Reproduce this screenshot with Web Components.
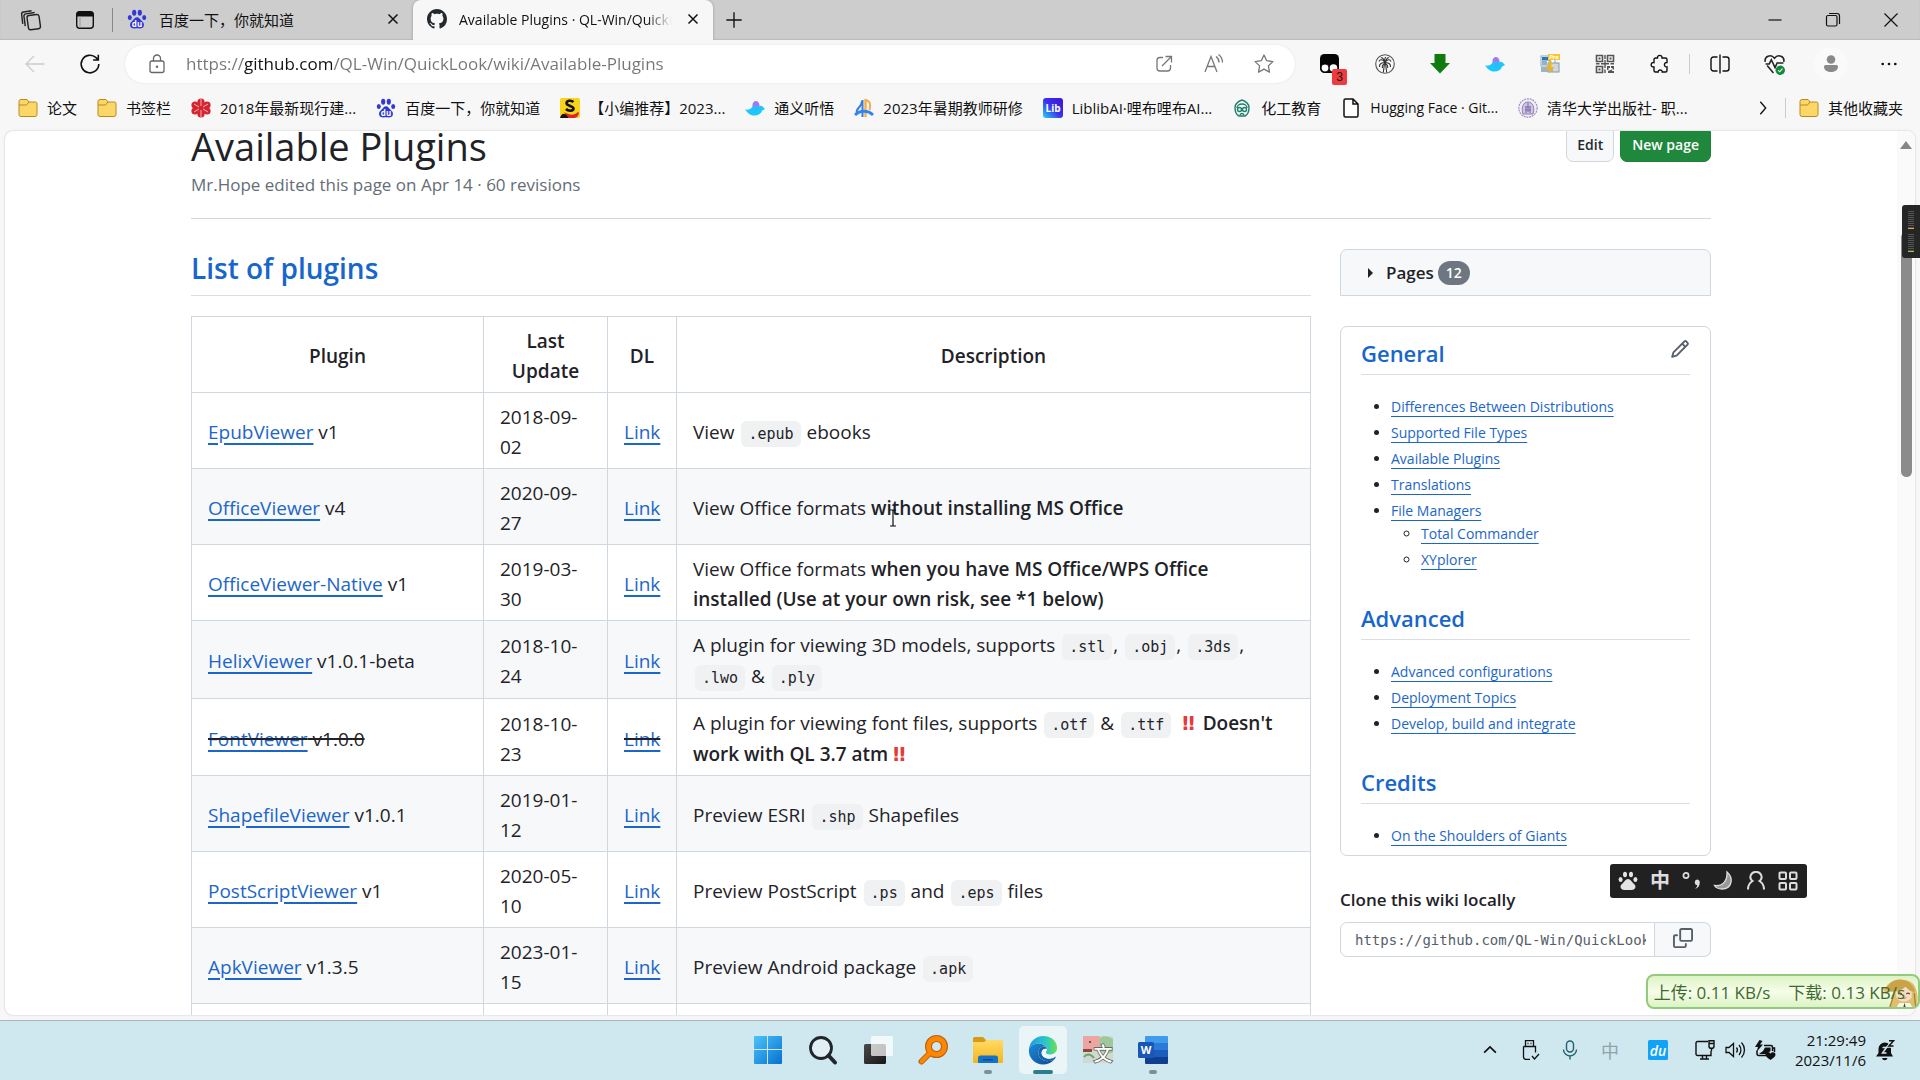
<!DOCTYPE html>
<html lang="zh-CN">
<head>
<meta charset="utf-8">
<title>Available Plugins · QL-Win/QuickLook Wiki</title>
<style>
  html, body { height: 100%; }
  body {
    margin: 0;
    display: flex;
    flex-direction: column;
    overflow: hidden;
    font-family: "Open Sans", "Noto Sans CJK SC", sans-serif;
    font-size: 14px;
    color: #1f2328;
    background: #f7f7f7;
  }
</style>
</head>
<body>
<browser-window></browser-window>
<task-bar></task-bar>

<script>
// every picture is drawn on a 20x20 grid unless the entry gives its own view box
const ICONS = {
  workspaces: `<g fill="none" stroke="#222" stroke-width="1.3"><rect x="7" y="5.5" width="11" height="13" rx="2" transform="rotate(-8 12 12)"/><path d="M4.800 15.5 3.6 6.7a2 2 0 0 1 1.7-2.3l8-1.2M2.5 13.5 1.5 5a2 2 0 0 1 1.7-2.2l7.3-1.2"/></g>`,
  tabaction: `<rect x="1.7" y="1.7" width="16.6" height="16.6" rx="3" fill="none" stroke="#111" stroke-width="1.4"/><path d="M1.5 6.5V4a2.5 2.5 0 0 1 2.5-2.5h12A2.5 2.5 0 0 1 18.5 4v2.5z" fill="#111"/><path d="M5 6v12" stroke="#999"/>`,
  baidu: `<g fill="#2f37d6"><ellipse cx="7.2" cy="3.8" rx="2.1" ry="3"/><ellipse cx="12.8" cy="3.8" rx="2.1" ry="3"/><ellipse cx="2.8" cy="8.5" rx="2" ry="2.6"/><ellipse cx="17.2" cy="8.5" rx="2" ry="2.6"/><path d="M10 8.3c2.2 0 3 2 4.3 3.3 1.7 1.6 3.2 2.8 2.5 5.4-.7 2.4-3 2.6-6.8 2.3-3.8.3-6.1.1-6.8-2.3-.7-2.6.8-3.8 2.5-5.4C7 10.3 7.8 8.3 10 8.3z"/></g><text x="10" y="17.8" font-family="Open Sans, sans-serif" font-size="8" font-weight="700" fill="#fff" text-anchor="middle">du</text>`,
  github: ["0 0 16 16", `<path fill="#24292f" d="M8 0C3.58 0 0 3.58 0 8c0 3.54 2.29 6.53 5.47 7.59.4.07.55-.17.55-.38 0-.19-.01-.82-.01-1.49-2.01.37-2.53-.49-2.69-.94-.09-.23-.48-.94-.82-1.13-.28-.15-.68-.52-.01-.53.63-.01 1.08.58 1.23.82.72 1.21 1.87.87 2.33.66.07-.52.28-.87.51-1.07-1.78-.2-3.64-.89-3.64-3.95 0-.87.31-1.59.82-2.15-.08-.2-.36-1.02.08-2.12 0 0 .67-.21 2.2.82.64-.18 1.32-.27 2-.27s1.36.09 2 .27c1.53-1.04 2.2-.82 2.2-.82.44 1.1.16 1.92.08 2.12.51.56.82 1.27.82 2.15 0 3.07-1.87 3.75-3.65 3.95.29.25.54.73.54 1.48 0 1.07-.01 1.93-.01 2.2 0 .21.15.46.55.38A8.01 8.01 0 0 0 16 8c0-4.42-3.58-8-8-8z"/>`],
  close: `<path d="m5 5 10 10M15 5 5 15" stroke="#111" stroke-width="1.6"/>`,
  plus: `<path d="M10 1.5v17M1.5 10h17" stroke="#111" stroke-width="1.5"/>`,
  minimize: `<path d="M3.5 10h13" stroke="#111" stroke-width="1.2"/>`,
  restore: `<g fill="none" stroke="#111" stroke-width="1.2"><rect x="3.5" y="5.5" width="10.5" height="10.5" rx="1.5"/><path d="M6 3.5h8A2.5 2.5 0 0 1 16.5 6v8"/></g>`,
  winclose: `<path d="m3.5 3.5 13 13m0-13-13 13" stroke="#111" stroke-width="1.2"/>`,
  back: `<path d="M19.500 10H1m8-8-8 8 8 8" fill="none" stroke="#ccc" stroke-width="1.3"/>`,
  reload: `<path d="M18.8 10A8.8 8.800 0 1 1 16 3.600L18 6M18.3 .8V6h-5.2" fill="none" stroke="#111" stroke-width="1.6"/>`,
  lock: `<g fill="none" stroke="#666" stroke-width="1.3"><rect x="3" y="7" width="14" height="11.5" rx="2"/><path d="M6.5 7V4.5a3.500 3.500 0 0 1 7 0V7"/></g><circle cx="10" cy="12.7" r="1.2" fill="#666"/>`,
  open: `<path d="M9 3.5H6A3 3 0 0 0 3 6.5V14a3 3 0 0 0 3 3h7.5a3 3 0 0 0 3-3v-3M8 12l9-9M11.5 2.5h6v6" fill="none" stroke="#777" stroke-width="1.3"/>`,
  read: `<path d="m1 18 6-15.500L13 18M3.2 12.5h7.7M12 2.5a7 7 0 0 1 3 6M14.5.5a10 10 0 0 1 4 8" fill="none" stroke="#777" stroke-width="1.3"/>`,
  star: `<path d="m10 1 2.700 5.700 6.200.9-4.500 4.300 1.100 6.200-5.500-3-5.500 3 1.100-6.200L1.100 7.600l6.200-.9z" fill="none" stroke="#777" stroke-width="1.3" stroke-linejoin="round"/>`,
  monkey: `<rect width="19" height="19" rx="4.5" fill="#050505"/><circle cx="5" cy="14" r="4" fill="#fff" stroke="#050505" stroke-width="1.2"/><circle cx="13.500" cy="14" r="3.800" fill="#fff"/>`,
  tree: `<circle cx="10" cy="10" r="9.300" fill="#f7f7f7" stroke="#555" stroke-width="1.1"/><g fill="none" stroke="#333" stroke-width="1.1"><path d="M9.500 9.500 8.300 18.500M10.500 9.500l1.200 9"/><path d="M10 9C8 5 5 5 4 7.500M10 9c-3-1-6 1-5.500 4M10 9C9 5 7 3 6 4M10 9c2-4 5-4 6-1.500M10 9c3-1 6 1 5.500 4M10 9c1-4 3-6 4-5M10 9c-1-3 0-5 .5-6M10 9.500c-2 1-3 3-2.500 4.500M10 9.500c2 1 3 3 2.500 4.500"/></g>`,
  download: `<path d="M4.5 0h11v9H20L10 19.500 0 9h4.500z" fill="#107c10"/>`,
  bird: `<path d="M7.500 10C7 5 8.500 3 11 3s4 3 3.500 7z" fill="#a07af0"/><path d="M0 11.500c4 .5 5.500-.5 7.500-2.500 2-1.800 5-1.500 6.500-.2 1-1.300 2.800-1.300 3.800 0L20 11l-2.800 1.500C16 16 13 17.500 9.500 17.500 4.500 17.500 3 15 0 11.500z" fill="#1ac8fb"/><path d="M8 9.500c2-1.500 5-1 6.500.5l-4 3.500z" fill="#4da5f6" opacity=".6"/>`,
  shot: `<rect x="1" y="2" width="14" height="10" fill="#fff" stroke="#8aa7c0"/><rect x="2" y="3" width="9" height="3.5" fill="#3475a8"/><rect x="2" y="7" width="5" height="4" fill="#8fb3cc"/><rect x="8" y="9" width="11" height="9" fill="#cfd8dd" stroke="#8897a0"/><path d="M1 13h12v5H1z" fill="#9fb4c0"/><rect x="8" y="0" width="12" height="6" fill="#f6c531"/><text x="14" y="5" font-family="Open Sans, sans-serif" font-size="6" font-weight="700" font-style="italic" fill="#fff" text-anchor="middle">Pro</text><path d="M8.5 7h3v6h3L10 18l-4.500-5h3z" fill="#f0b41c"/>`,
  qr: `<path d="M1.500 1.500h6v6h-6zM12.500 1.500h6v6h-6zM1.500 12.500h6v6h-6z" fill="none" stroke="#555" stroke-width="1.600"/><path d="M3.500 3.500h2v2h-2zM14.500 3.500h2v2h-2zM3.500 14.500h2v2h-2zM9.300 1h1.400v4H9.300zM9.300 6h1.400v3H14v1.400h-3.300V14H9.300v-3.600H6V9h3.300zM1 9h3.500v1.400H1zM15.500 9H19v1.400h-3.500zM9.300 15.500h1.400V19H9.300zM12 12h3v2h-1.500v2H12zM16 12h3v3.500h-1.500V14H16zM13 17l4-1.500V17h2v2h-6z" fill="#555"/>`,
  puzzle: `<path d="M7.500 4C7 .5 12.500.5 12 4h3.500A1.500 1.500 0 0 1 17 5.500v3c-3.400-.6-3.400 5 0 4.400v3.600a1.500 1.500 0 0 1-1.500 1.500h-3.300c.3-2.600-4.200-2.600-4 0H5.500A1.500 1.500 0 0 1 4 16.500V13c-3.800.4-3.800-5 0-4.400V5.500A1.500 1.500 0 0 1 5.500 4z" fill="none" stroke="#111" stroke-width="1.4"/>`,
  split: `<path d="M7.500 3h-4A2.500 2.500 0 0 0 1 5.500v9A2.500 2.500 0 0 0 3.500 17h4M12.500 3h4A2.500 2.500 0 0 1 19 5.500v9a2.500 2.500 0 0 1-2.500 2.500h-4M10 .5v19" fill="none" stroke="#111" stroke-width="1.4"/>`,
  heart: `<path d="M1.500 9.500H5l2-4 3.500 7.500 2-4.500h6M1.200 7.500C0 2.500 6.500-.5 10 4c3.500-4.500 10-1.500 8.800 3.500M3 11l6 7" fill="none" stroke="#222" stroke-width="1.5"/><circle cx="15.500" cy="15.500" r="4.500" fill="#128a3a"/><path d="m13.500 15.500 1.500 1.500 2.600-3" fill="none" stroke="#fff"/>`,
  profile: `<circle cx="10" cy="5.5" r="4.3" fill="#8a8a8a"/><path d="M3 12.500A1.500 1.500 0 0 1 4.500 11h11a1.500 1.500 0 0 1 1.500 1.500c0 4-3.500 5.500-7 5.500s-7-1.500-7-5.500z" fill="#8a8a8a"/>`,
  more: `<g fill="#111"><circle cx="3" cy="10" r="1.5"/><circle cx="10" cy="10" r="1.5"/><circle cx="17" cy="10" r="1.5"/></g>`,
  folder: `<path d="M3 1.500h6l2 2.500h6.500A1.500 1.500 0 0 1 19 5.500v11a2 2 0 0 1-2 2H3a2 2 0 0 1-2-2v-13a2 2 0 0 1 2-2z" fill="#fbd768" stroke="#b98a1c"/><path d="M1 7h7.500L11 4" fill="none" stroke="#b98a1c"/>`,
  flower: `<g fill="#d6232e"><circle cx="10" cy="4" r="3.6"/><circle cx="10" cy="16" r="3.6"/><circle cx="4" cy="7" r="3.6"/><circle cx="16" cy="7" r="3.6"/><circle cx="4" cy="13" r="3.6"/><circle cx="16" cy="13" r="3.6"/><circle cx="10" cy="10" r="4"/></g><path d="M10 1v7m0 4v7M3 6l5 3m4 2 5 3M3 14l5-3m4-2 5-3" stroke="#f9d5d5" stroke-width=".8"/>`,
  sogou: `<rect width="20" height="20" rx="2" fill="#f7d31b"/><path d="M13.500 4C11 1.800 6.500 2.500 6.500 5.300S14 8 13.500 10.800 8 13 6 11" fill="none" stroke="#111" stroke-width="2.600"/><path d="M0 20c2-6 6-5 9 0z" fill="#111"/><path d="M4 14c4 2 9 5 14 0l1 1c-1 4-3 5-6 5H9z" fill="#e02222"/>`,
  bridge: `<g fill="none"><path d="M8.500 2v17" stroke="#3a7be0" stroke-width="2"/><path d="M3 15c-2-5 5-5 5-12" stroke="#3a7be0" stroke-width="2"/><path d="M11.500 1v18" stroke="#f3ad4a" stroke-width="2.400"/><path d="M12 2c4 1 5 4 3.500 10" stroke="#f3ad4a" stroke-width="2"/><path d="M1 17c5-5 13-5 18 0" stroke="#2f86ee" stroke-width="2.800"/></g>`,
  lib: `<defs><linearGradient id="g" x1="1" y1="0" x2="0" y2="1"><stop stop-color="#3a18d0"/><stop offset=".5" stop-color="#3c2ff0"/><stop offset="1" stop-color="#21d7ee"/></linearGradient></defs><rect width="20" height="20" rx="3" fill="url(#g)"/><text x="10" y="14" font-family="Open Sans, sans-serif" font-size="10" font-weight="700" fill="#fff" text-anchor="middle">Lib</text>`,
  leaf: `<g fill="none" stroke="#1d7f6c" stroke-width="1.4"><path d="M10 2c4 1.500 7 3 7 7.500S15 17 13 18H7c-2-1-4-4-4-8.500S6 3.500 10 2z"/><path d="M10 6C7 6 5 8 5 10m5-4c3 0 5 2 5 4"/><circle cx="7.500" cy="11.500" r="2"/><circle cx="12.500" cy="11.500" r="2"/><path d="M8 17c1-2 3-2 4 0"/></g>`,
  page: `<path d="M4.500 1H12l5 5v11.500a1.500 1.500 0 0 1-1.500 1.500h-11A1.500 1.500 0 0 1 3 17.500v-15A1.500 1.500 0 0 1 4.500 1zM12 1v5h5" fill="#fff" stroke="#111" stroke-width="1.5"/>`,
  seal: `<circle cx="10" cy="10" r="9.200" fill="#f1edf7" stroke="#a294c2" stroke-width="1.200" stroke-dasharray="2 .8"/><path d="M5 16c-2-6 0-12 5-12s7 6 5 12z" fill="#cfc5e0" stroke="#8d7cb3"/><path d="M7.500 9h5M7 12h6M8 8v7m4-7v7M10 5v9" stroke="#7d6aa8"/>`,
  chevron: `<path d="m7 3 6 7-6 7" fill="none" stroke="#111" stroke-width="1.5"/>`,
  pencil: ["0 0 16 16", `<path fill="#57606a" d="M11.013 1.427a1.75 1.75 0 0 1 2.474 0l1.086 1.086a1.75 1.75 0 0 1 0 2.474l-8.61 8.61c-.21.21-.47.364-.756.445l-3.251.93a.75.75 0 0 1-.927-.928l.929-3.25c.081-.286.235-.547.445-.758l8.61-8.61Zm.176 4.823L9.75 4.81l-6.286 6.287a.253.253 0 0 0-.064.108l-.558 1.953 1.953-.558a.253.253 0 0 0 .108-.064Zm1.238-3.763a.25.25 0 0 0-.354 0L10.811 3.75l1.439 1.44 1.263-1.263a.25.25 0 0 0 0-.354Z"/>`],
  copy: ["0 0 16 16", `<path fill="#57606a" d="M0 6.75C0 5.784.784 5 1.75 5h1.5a.75.75 0 0 1 0 1.5h-1.5a.25.25 0 0 0-.25.25v7.5c0 .138.112.25.25.25h7.5a.25.25 0 0 0 .25-.25v-1.5a.75.75 0 0 1 1.5 0v1.5A1.75 1.75 0 0 1 9.25 16h-7.5A1.75 1.75 0 0 1 0 14.25ZM5 1.75C5 .784 5.784 0 6.75 0h7.5C15.216 0 16 .784 16 1.75v7.5A1.75 1.75 0 0 1 14.25 11h-7.5A1.75 1.75 0 0 1 5 9.25Zm1.75-.25a.25.25 0 0 0-.25.25v7.5c0 .138.112.25.25.25h7.5a.25.25 0 0 0 .25-.25v-7.5a.25.25 0 0 0-.25-.25Z"/>`],
  ibeam: `<path d="M7 2h2.500l.5 1 .5-1H13M10 3v14M7 18h2.500l.5-1 .5 1H13" fill="none" stroke="#111" stroke-width="1.2"/>`,
  imepaw: `<g fill="#e4e4e4"><ellipse cx="7" cy="3.5" rx="2" ry="2.800"/><ellipse cx="13" cy="3.5" rx="2" ry="2.800"/><ellipse cx="2.600" cy="8.5" rx="2" ry="2.500"/><ellipse cx="17.400" cy="8.5" rx="2" ry="2.500"/><path d="M10 8c2.500 0 3.500 2.500 5 4 2 1.600 3 3 2.200 5-1 2.300-4 2-7.200 2s-6.200.3-7.200-2c-.8-2 .2-3.400 2.200-5 1.500-1.500 2.500-4 5-4z"/></g>`,
  punct: `<circle cx="4" cy="4.500" r="2.600" fill="none" stroke="#ddd" stroke-width="1.700"/><path d="M15 8.500a2.800 2.800 0 0 1 2.800 3.200c0 3-1.800 5.300-4.800 6.300 1.500-1.500 2.200-2.600 2.200-3.800a2.900 2.900 0 0 1-.2-5.700z" fill="#ddd"/>`,
  moon: `<path d="M13 1c7 6 5 17-5 17-4 0-6.500-1.800-7.500-3.500C8 15.500 13.500 11 13 1z" fill="#999" stroke="#ddd" stroke-width="1.3"/>`,
  person: `<path d="M10 1a5 5 0 0 1 3.500 9c3 1.800 4.500 4.500 4.500 8.500M10 1a5 5 0 0 0-3.500 9c-3 1.800-4.500 4.500-4.500 8.500" fill="none" stroke="#ddd" stroke-width="2"/>`,
  grid: `<g fill="none" stroke="#ddd" stroke-width="2"><rect x="1.500" y="1.500" width="6.500" height="6.500" rx="1"/><rect x="12" y="1.500" width="6.500" height="6.500" rx="1"/><rect x="1.500" y="12" width="6.500" height="6.500" rx="1"/><rect x="12" y="12" width="6.500" height="6.500" rx="1"/></g>`,
  start: ["0 0 30 30", `<defs><linearGradient id="g" x1="0" y1="0" x2="1" y2="1"><stop stop-color="#4cc3fa"/><stop offset="1" stop-color="#0671cf"/></linearGradient></defs><path d="M1 2a1 1 0 0 1 1-1h12v13H1zM15 1h13a1 1 0 0 1 1 1v12H15zM1 15h13v14H2a1 1 0 0 1-1-1zM15 15h14v13a1 1 0 0 1-1 1H15z" fill="url(#g)"/>`],
  search: ["0 0 30 30", `<circle cx="13" cy="13" r="10.500" fill="#e1eef3" stroke="#20262c" stroke-width="2.800"/><path d="m20.500 20.500 6.500 7" stroke="#20262c" stroke-width="4" stroke-linecap="round"/>`],
  taskview: ["0 0 30 30", `<defs><linearGradient id="g" x1="0" y1="0" x2="1" y2="1"><stop stop-color="#4a4a4a"/><stop offset="1" stop-color="#161616"/></linearGradient></defs><rect x="1" y="9" width="22" height="20" rx="1.500" fill="url(#g)"/><rect x="8" y="1" width="22" height="20" rx="1.500" fill="#fff" opacity=".72"/>`],
  everything: ["0 0 30 30", `<g fill="none"><circle cx="18.500" cy="11.500" r="8" stroke="#b65e10" stroke-width="7"/><path d="m12 18-8.500 8.500" stroke="#b65e10" stroke-width="6" stroke-linecap="round"/><circle cx="18.500" cy="11.500" r="8" stroke="#ff8600" stroke-width="5"/><path d="m12 18-8.500 8.500" stroke="#ff8600" stroke-width="4" stroke-linecap="round"/></g>`],
  explorer: ["0 0 30 30", `<defs><linearGradient id="g" x1="0" y1="0" x2="0" y2="1"><stop stop-color="#ffdb66"/><stop offset="1" stop-color="#f5b51c"/></linearGradient></defs><path d="M0 3.500A1.500 1.500 0 0 1 1.500 2H10l3 3v5H0z" fill="#d79a10"/><path d="M0 7h11l2.500-2H29a1 1 0 0 1 1 1v21a1 1 0 0 1-1 1H1a1 1 0 0 1-1-1z" fill="url(#g)"/><path d="M5 28v-5a2.500 2.500 0 0 1 2.500-2.500h15A2.500 2.500 0 0 1 25 23v5z" fill="#1373c9"/><path d="M10 24h10v1.500H10z" fill="#0a4d93"/>`],
  edge: ["0 0 32 32", `<defs><linearGradient id="a" x1="0" y1=".3" x2="1" y2=".3"><stop stop-color="#1d9be0"/><stop offset=".6" stop-color="#2cc7c8"/><stop offset="1" stop-color="#6be04c"/></linearGradient><linearGradient id="b" x1="0" y1="0" x2="1" y2="1"><stop stop-color="#1b8bd8"/><stop offset="1" stop-color="#0c4a95"/></linearGradient></defs><path d="M1 15C2 6 9 1 16.500 1 25 1 31 7 31 13.500c0 4.500-3.500 7.500-7.500 7.500-3 0-5-1-4.500-2.500.5-1.200 1-2 1-3.500C20 11.500 16 9 11.500 9 6.500 9 2.500 11.500 1 15z" fill="url(#a)"/><path d="M1 15c1.500-3.500 5.500-6 10.500-6 3.500 0 6 1.500 7.300 3.300C14 11.500 11 14.500 11 19c0 6 5.500 9.500 11 8.800 2.500-.3 4.500-1 6-1.800-3 3.500-7.500 5.500-12 5.500C7.500 31.500 0 24.500 1 15z" fill="url(#b)"/><path d="M11 19c0-4.500 3-7.500 7.800-6.700.8 1 1.200 2 1.200 2.900-3-1-5.500 1-5.500 4 0 4 5 6.300 9 5.800 2-.3 4-1 5.700-2 .8.7.1 2-1.200 3-1.500.9-3.500 1.600-6 1.800-5.500.7-11-2.800-11-8.800z" fill="#1a63ae"/><path d="M14.500 19c0-3 2.500-5 5.500-4-.1 1.400-.6 2.200-1 3.200-.5 1.600 1.500 2.800 4.500 2.800 2.300 0 4.300-.8 5.500-2 .9.900.9 3.200 0 4.300-2 1.600-4 2-6 2-4 .5-8.500-2.300-8.500-6.300z" fill="#eef7fb"/>`],
  translate: ["0 0 30 30", `<path d="M0 1h30v27H0z" fill="#cfdcc8"/><path d="M0 1h16c3 4 2 12-3 14H0z" fill="#eda5a3"/><path d="M17 3c3-3 9-2 13 1v13c-5 3-12 1-14-4z" fill="#9fc79b"/><path d="M0 16h10l5 12H0z" fill="#cdd9d5"/><circle cx="7" cy="7" r="1" fill="#333"/><path d="M0 14h9v3H0z" fill="#8a4a3c"/><path d="M1 22c3-4 7-3 10 1" fill="none" stroke="#6fa06a" stroke-width="2"/><text x="20" y="26" font-family="Noto Sans CJK SC, sans-serif" font-size="19" font-weight="500" fill="#fff" stroke="#555" stroke-width="1.500" paint-order="stroke" text-anchor="middle">文</text>`],
  word: ["0 0 30 30", `<path d="M8 1h21a1 1 0 0 1 1 1v6H7V2a1 1 0 0 1 1-1z" fill="#3f9cec"/><path d="M7 8h23v7H7z" fill="#2a7bd8"/><path d="M7 15h23v7H7z" fill="#1b5cbd"/><path d="M7 22h23v6a1 1 0 0 1-1 1H8a1 1 0 0 1-1-1z" fill="#103f91"/><rect x="0" y="7" width="16" height="16" rx="1.500" fill="#1a56b5"/><text x="8" y="19" font-family="Open Sans, sans-serif" font-size="11" font-weight="700" fill="#fff" text-anchor="middle">W</text>`],
  up: `<path d="m3.500 13 6.500-6.500 6.500 6.500" fill="none" stroke="#111" stroke-width="1.900"/>`,
  usb: `<path d="M5.500 6.500V.7h8v5.800M3.500 6.500h12v6M3.500 6.500V17A2.500 2.500 0 0 0 6 19.300h4M7.500 3.500h1m2 0h1M12 16l2.500 3 4.500-5" fill="none" stroke="#111" stroke-width="1.3"/>`,
  mic: `<rect x="6.500" y="1" width="7" height="11" rx="3.500" fill="none" stroke="#22616b" stroke-width="1.4"/><path d="M3.500 9.500a6.500 6.500 0 0 0 13 0M10 16v3.500" fill="none" stroke="#22616b" stroke-width="1.4"/>`,
  du: `<rect width="20" height="20" rx="1.500" fill="#12a3f7"/><text x="10" y="16" font-family="Open Sans, sans-serif" font-size="14" font-weight="600" font-style="italic" fill="#fff" text-anchor="middle">du</text>`,
  monitor: `<path d="M13 1.500H2.500A1.500 1.500 0 0 0 1 3v11a1.500 1.500 0 0 0 1.500 1.500H16V11M5 19h9M7.500 16v3m4-3v3M16.500 7.500V11M14 .7h5v5.300a2.500 2.500 0 0 1-5 0zM14 3.500h5" fill="none" stroke="#111" stroke-width="1.4"/>`,
  volume: `<path d="M1 7.500h3L8.500 3.500v13L4 12.500H1zM11.500 7.500a4 4 0 0 1 0 5M14 5a7.500 7.500 0 0 1 0 10M16.500 2.500a11 11 0 0 1 0 15" fill="none" stroke="#111" stroke-width="1.3"/>`,
  battery: `<path d="M9 5.500h7A1.500 1.500 0 0 1 17.500 7v4M2 10.500V14a1.500 1.500 0 0 0 1.500 1.500H11M18 8h1.500v4" fill="none" stroke="#111" stroke-width="1.500"/><path d="M10 7.500h5.500V11l-4 3H4l4-3z" fill="#111"/><path d="M4.500 0 0 7h3l-1.500 5L8 4.500H5L7.500 1z" fill="#111"/><path d="M15.500 20c-3-2-5-3.500-5-5.500 0-2.500 3.800-3.200 5-.8 1.200-2.400 5-1.700 5 .8 0 2-2 3.500-5 5.500z" fill="#111"/>`,
  bell: `<path d="M9 2.500a6 6 0 0 1 6 6V13l2 3.500H0L2.500 13V8.500A6.300 6.300 0 0 1 9 2.500z" fill="#111"/><path d="M6 18h5.500A2.800 2.800 0 0 1 6 18z" fill="#111"/><path d="M6.500 7.500h4l-4 5.500h4" fill="none" stroke="#cfe8ef" stroke-width="1.500"/><path d="M13 .8h4.500L13 6h4.500" fill="none" stroke="#cfe8ef" stroke-width="3.500"/><path d="M13 .8h4.500L13 6h4.500" fill="none" stroke="#111" stroke-width="1.500"/>`,
  girl: ["0 0 40 34", `<path d="M4 10C8 0 28-2 35 6c6 8 5 20 3 28H10c-3-6 4-12 2-20l-8 3-4-8z" fill="#dcc06e"/><path d="M15 12c2-5 14-6 18 0v9c-4 6-14 6-17 0z" fill="#f6dcc0"/><path d="M1 9c4 2 6-1 8-4C16-2 32-1 37 14c-6 2-9-4-11-5-4 4-10 6-16 5z" fill="#c9a24a"/><path d="M18 17q2-2 4 0m5 0q2-2 4 0" fill="none" stroke="#6b4a2a" stroke-width="1.300"/><path d="M23 21q2 2 4 0" fill="none" stroke="#c0645a"/><path d="M19 27h12l4 7H15z" fill="#f7f4ec"/><path d="m25 27 2 7h-4z" fill="#444"/><path d="M13 17c-1 6-3 10-5 17M36 16c0 6 1 12 2 18" fill="none" stroke="#a8853a" stroke-width="1.500"/>`],
};

class UiIcon extends HTMLElement {
  constructor() {
    super();
    this.attachShadow({ mode: "open" });
  }

  connectedCallback() {
    const icon = ICONS[this.getAttribute("name")];
    const size = this.getAttribute("size") || 20;
    const [box, body] = Array.isArray(icon) ? icon : ["0 0 20 20", icon];
    this.shadowRoot.innerHTML = `
      <style>
        :host { display: inline-flex; flex: none; }
        svg { display: block; overflow: visible; }
      </style>
      <svg width="${size}" height="${size}" viewBox="${box}" aria-hidden="true">${body}</svg>
    `;
  }
}
customElements.define("ui-icon", UiIcon);

class BrowserTab extends HTMLElement {
  constructor() {
    super();
    this.attachShadow({ mode: "open" });
    this.shadowRoot.innerHTML = `
      <style>
        :host {
          display: flex;
          align-items: center;
          gap: 12px;
          box-sizing: border-box;
          width: 300px;
          height: 40px;
          padding: 0 11px 2px 14px;
          color: #111;
          font-size: 15px;
        }
        :host(:lang(en)) { font-size: 14px; }
        :host([active]) {
          background: #f7f7f7;
          border-radius: 8px 8px 0 0;
          box-shadow: 0 0 3px #999;
          clip-path: inset(0 -4px);
        }
        .title { flex: 1; overflow: hidden; white-space: nowrap; }
        :host([active]) .title {
          -webkit-mask-image: linear-gradient(90deg, #000 88%, transparent);
          mask-image: linear-gradient(90deg, #000 88%, transparent);
        }
        button { border: 0; padding: 0; background: none; display: flex; }
      </style>
      <slot name="icon"></slot>
      <span class="title"><slot></slot></span>
      <button aria-label="Close tab"><ui-icon name="close" size="18"></ui-icon></button>
    `;
  }
}
customElements.define("browser-tab", BrowserTab);

class TabStrip extends HTMLElement {
  constructor() {
    super();
    this.attachShadow({ mode: "open" });
    this.shadowRoot.innerHTML = `
      <style>
        :host {
          display: flex;
          align-items: center;
          height: 40px;
          background: #cdcdcd;
          box-shadow: inset 0 -1px 1px #bbb;
        }
        button {
          display: flex;
          justify-content: center;
          border: 0;
          padding: 0;
          background: none;
          width: 54px;
        }
        .first { margin-left: 4px; }
        .line { width: 1px; height: 24px; background: #888; }
        .new { width: 42px; }
        .win { margin-left: auto; display: flex; }
        .win button { width: 58px; }
      </style>
      <button class="first" aria-label="Workspaces"><ui-icon name="workspaces" size="22"></ui-icon></button>
      <button aria-label="Tab actions"><ui-icon name="tabaction"></ui-icon></button>
      <span class="line"></span>
      <browser-tab><ui-icon slot="icon" name="baidu"></ui-icon>百度一下，你就知道</browser-tab>
      <browser-tab active lang="en"><ui-icon slot="icon" name="github"></ui-icon>Available Plugins · QL-Win/QuickLook</browser-tab>
      <button class="new" aria-label="New tab"><ui-icon name="plus" size="18"></ui-icon></button>
      <div class="win">
        <button aria-label="Minimize"><ui-icon name="minimize"></ui-icon></button>
        <button aria-label="Restore"><ui-icon name="restore"></ui-icon></button>
        <button aria-label="Close"><ui-icon name="winclose"></ui-icon></button>
      </div>
    `;
  }
}
customElements.define("tab-strip", TabStrip);

class ToolBar extends HTMLElement {
  constructor() {
    super();
    this.attachShadow({ mode: "open" });
    const button = (name, label, size = 20) =>
      `<button aria-label="${label}"><ui-icon name="${name}" size="${size}"></ui-icon></button>`;
    this.shadowRoot.innerHTML = `
      <style>
        :host { display: flex; align-items: center; height: 48px; padding: 0 2px 0 7px; }
        button {
          position: relative;
          display: flex;
          align-items: center;
          justify-content: center;
          flex: none;
          width: 55px;
          height: 38px;
          border: 0;
          padding: 0;
          background: none;
        }
        .address {
          flex: 1;
          display: flex;
          align-items: center;
          height: 38px;
          margin: 0 7px 0 8px;
          padding: 0 6px 0 22px;
          border-radius: 19px;
          background: #fff;
          box-shadow: 0 0 2px #ddd;
        }
        .address button { width: 50px; }
        input {
          flex: 1;
          min-width: 0;
          margin-left: 19px;
          border: 0;
          padding: 0;
          outline: 0;
          font: 17px/26px "Open Sans", sans-serif;
          color: #767676;
          background: linear-gradient(90deg, #767676 57px, #111 57px 146px, #767676 146px);
          -webkit-background-clip: text;
          background-clip: text;
          -webkit-text-fill-color: transparent;
        }
        .badge {
          position: absolute;
          right: 10px;
          bottom: -2px;
          width: 15px;
          font-size: 12px;
          line-height: 16px;
          border-radius: 2px;
          background: #ef3b3e;
          color: #111;
        }
        .line { width: 1px; height: 20px; margin: 0 2px; background: #ccc; }
        .wide { width: 58px; }
        .round ui-icon { padding: 7px; border-radius: 50%; background: #fafafa; }
      </style>
      ${button("back", "Back")}
      ${button("reload", "Refresh")}
      <div class="address">
        <ui-icon name="lock"></ui-icon>
        <input type="text" aria-label="Address" value="https://github.com/QL-Win/QuickLook/wiki/Available-Plugins">
        ${button("open", "Open")}${button("read", "Read aloud")}${button("star", "Favorite")}
      </div>
      <button aria-label="Tampermonkey"><ui-icon name="monkey"></ui-icon><span class="badge">3</span></button>
      ${button("tree", "Extension")}
      ${button("download", "Downloads")}
      ${button("bird", "Tingwu")}
      ${button("shot", "Capture")}
      ${button("qr", "QR code")}
      ${button("puzzle", "Extensions")}
      <span class="line"></span>
      ${button("split", "Split screen")}
      ${button("heart", "Browser essentials", 21)}
      <button class="wide round" aria-label="Profile"><ui-icon name="profile"></ui-icon></button>
      <button class="wide" aria-label="Settings and more"><ui-icon name="more" size="18"></ui-icon></button>
    `;
  }
}
customElements.define("tool-bar", ToolBar);

class BookMark extends HTMLElement {
  constructor() {
    super();
    this.attachShadow({ mode: "open" });
  }

  connectedCallback() {
    this.shadowRoot.innerHTML = `
      <style>
        :host { display: block; flex: none; font-size: 15px; }
        :host(:lang(en)) { font-size: 14px; }
        a {
          display: flex;
          align-items: center;
          gap: 9px;
          color: #111;
          text-decoration: none;
          white-space: nowrap;
          line-height: 24px;
        }
      </style>
      <a href="#"><ui-icon name="${this.getAttribute("icon")}"></ui-icon><slot></slot></a>
    `;
  }
}
customElements.define("book-mark", BookMark);

class BookmarkBar extends HTMLElement {
  constructor() {
    super();
    this.attachShadow({ mode: "open" });
    this.shadowRoot.innerHTML = `
      <style>
        :host {
          display: flex;
          align-items: center;
          gap: 20px;
          height: 40px;
          padding: 0 17px 2px 18px;
        }
        .end { margin-left: auto; display: flex; align-items: center; gap: 13px; }
        button { border: 0; padding: 0; background: none; display: flex; }
        .line { width: 1px; height: 20px; background: #ccc; }
      </style>
      <book-mark icon="folder">论文</book-mark>
      <book-mark icon="folder">书签栏</book-mark>
      <book-mark icon="flower">2018年最新现行建...</book-mark>
      <book-mark icon="baidu">百度一下，你就知道</book-mark>
      <book-mark icon="sogou">【小编推荐】2023...</book-mark>
      <book-mark icon="bird">通义听悟</book-mark>
      <book-mark icon="bridge">2023年暑期教师研修</book-mark>
      <book-mark icon="lib">LiblibAI·哩布哩布AI...</book-mark>
      <book-mark icon="leaf">化工教育</book-mark>
      <book-mark icon="page" lang="en">Hugging Face · Git...</book-mark>
      <book-mark icon="seal">清华大学出版社- 职...</book-mark>
      <div class="end">
        <button aria-label="More bookmarks"><ui-icon name="chevron" size="18"></ui-icon></button>
        <span class="line"></span>
        <book-mark icon="folder">其他收藏夹</book-mark>
      </div>
    `;
  }
}
customElements.define("bookmark-bar", BookmarkBar);

const PLUGINS = [
  ["EpubViewer", "v1", "2018-09-02", "View <code>.epub</code> ebooks"],
  ["OfficeViewer", "v4", "2020-09-27", "View Office formats <b>without installing MS Office</b>"],
  ["OfficeViewer-Native", "v1", "2019-03-30", "View Office formats <b>when you have MS Office/WPS Office installed (Use at your own risk, see *1 below)</b>"],
  ["HelixViewer", "v1.0.1-beta", "2018-10-24", "A plugin for viewing 3D models, supports <code>.stl</code>, <code>.obj</code>, <code>.3ds</code>, <code>.lwo</code> &amp; <code>.ply</code>"],
  ["FontViewer", "v1.0.0", "2018-10-23", "A plugin for viewing font files, supports <code>.otf</code> &amp; <code>.ttf</code> &nbsp;<i>‼</i> <b>Doesn't work with QL 3.7 atm</b> <i>‼</i>", true],
  ["ShapefileViewer", "v1.0.1", "2019-01-12", "Preview ESRI <code>.shp</code> Shapefiles"],
  ["PostScriptViewer", "v1", "2020-05-10", "Preview PostScript <code>.ps</code> and <code>.eps</code> files"],
  ["ApkViewer", "v1.3.5", "2023-01-15", "Preview Android package <code>.apk</code>"],
];

class PluginTable extends HTMLElement {
  constructor() {
    super();
    this.attachShadow({ mode: "open" });
    this.render();
  }

  render() {
    const rows = PLUGINS.map(([name, version, date, text, gone]) => {
      const title = `<a href="#">${name}</a> ${version}`;
      const link = `<a href="#">Link</a>`;
      return `
        <tr>
          <td>${gone ? `<s>${title}</s>` : title}</td>
          <td>${date}</td>
          <td>${gone ? `<s>${link}</s>` : link}</td>
          <td class="text">${text}</td>
        </tr>`;
    }).join("");
    this.shadowRoot.innerHTML = `
      <style>
        :host { display: block; font-size: 19px; line-height: 30px; }
        table { width: 100%; table-layout: fixed; border-collapse: collapse; }
        th, td { border: 1px solid #d0d7de; padding: 9px 16px 6px; }
        th { font-weight: 600; }
        td { text-align: left; }
        td.text { padding-right: 24px; }
        tbody tr:nth-child(even) { background: #f6f8fa; }
        .name { width: 292px; }
        .date { width: 124px; }
        .dl { width: 69px; }
        a {
          color: #1c66c9;
          text-decoration: underline 2px;
          text-underline-offset: 4px;
        }
        s { text-decoration: line-through 2px #1f2328; }
        b { font-weight: 600; }
        i {
          margin-right: 3px;
          font: 700 20px/24px "DejaVu Sans", sans-serif;
          color: #e33b3b;
        }
        code {
          margin: 0 1px 0 2px;
          font: 15px/27px "DejaVu Sans Mono", monospace;
          padding: 4px 7px;
          border-radius: 6px;
          background: #eff1f3;
        }
      </style>
      <table>
        <colgroup><col class="name"><col class="date"><col class="dl"><col></colgroup>
        <thead><tr><th>Plugin</th><th>Last Update</th><th>DL</th><th>Description</th></tr></thead>
        <tbody>${rows}<tr><td>&nbsp;</td><td></td><td></td><td></td></tr></tbody>
      </table>
    `;
  }
}
customElements.define("plugin-table", PluginTable);

class SideSection extends HTMLElement {
  constructor() {
    super();
    this.attachShadow({ mode: "open" });
  }

  connectedCallback() {
    this.shadowRoot.innerHTML = `
      <style>
        :host { display: block; }
        h2 {
          margin: 0 0 20px;
          padding-bottom: 7px;
          border-bottom: 1px solid #d8dee4;
          color: #1766cc;
          font-size: 22px;
          font-weight: 600;
          line-height: 28px;
        }
      </style>
      <h2>${this.getAttribute("heading")}</h2>
      <slot></slot>
    `;
  }
}
customElements.define("side-section", SideSection);

class WikiSidebar extends HTMLElement {
  constructor() {
    super();
    this.attachShadow({ mode: "open" });
    this.shadowRoot.innerHTML = `
      <style>
        :host { display: block; }
        summary {
          display: flex;
          align-items: center;
          height: 45px;
          padding: 0 27px;
          border: 1px solid #d0d7de;
          border-radius: 7px 7px 0 0;
          background: #f6f8fa;
          font-size: 17px;
          font-weight: 600;
        }
        summary::before {
          content: "";
          margin-right: 13px;
          border: 5px solid transparent;
          border-left-color: #1f2328;
          border-right: 0;
        }
        .count {
          margin-left: 4px;
          padding: 0 8px;
          border-radius: 12px;
          background: #6e7781;
          color: #fff;
          font-size: 14px;
          line-height: 24px;
        }
        .box {
          position: relative;
          display: flex;
          flex-direction: column;
          gap: 33px;
          margin-top: 30px;
          padding: 12px 20px 8px;
          border: 1px solid #d0d7de;
          border-radius: 7px;
        }
        .edit {
          position: absolute;
          top: 12px;
          right: 20px;
          border: 0;
          padding: 0;
          background: none;
        }
        ul { margin: 0; padding-left: 30px; font-size: 14px; line-height: 23px; }
        ul ul { padding-left: 30px; }
        li + li { margin-top: 3px; }
        li a { color: #1c66c9; text-underline-offset: 4px; text-decoration-skip-ink: none; }
        h5 { margin: 31px 0 9px; font-size: 17px; font-weight: 600; line-height: 26px; }
        .clone { display: flex; height: 35px; }
        input {
          flex: 1;
          min-width: 0;
          box-sizing: border-box;
          padding: 0 8px 0 14px;
          border: 1px solid #d0d7de;
          border-radius: 7px 0 0 7px;
          font: 14px "DejaVu Sans Mono", monospace;
          color: #57606a;
        }
        .copy {
          width: 56px;
          border: 1px solid #d0d7de;
          border-left: 0;
          border-radius: 0 7px 7px 0;
          background: #f6f8fa;
        }
      </style>
      <details>
        <summary>Pages <span class="count">12</span></summary>
      </details>
      <div class="box">
        <button class="edit" aria-label="Edit sidebar"><ui-icon name="pencil"></ui-icon></button>
        <side-section heading="General">
          <ul>
            <li><a href="#">Differences Between Distributions</a></li>
            <li><a href="#">Supported File Types</a></li>
            <li><a href="#">Available Plugins</a></li>
            <li><a href="#">Translations</a></li>
            <li><a href="#">File Managers</a>
              <ul>
                <li><a href="#">Total Commander</a></li>
                <li><a href="#">XYplorer</a></li>
              </ul>
            </li>
          </ul>
        </side-section>
        <side-section heading="Advanced">
          <ul>
            <li><a href="#">Advanced configurations</a></li>
            <li><a href="#">Deployment Topics</a></li>
            <li><a href="#">Develop, build and integrate</a></li>
          </ul>
        </side-section>
        <side-section heading="Credits">
          <ul><li><a href="#">On the Shoulders of Giants</a></li></ul>
        </side-section>
      </div>
      <h5><label for="clone">Clone this wiki locally</label></h5>
      <div class="clone">
        <input id="clone" type="text" readonly value="https://github.com/QL-Win/QuickLook.wiki.git">
        <button class="copy" aria-label="Copy"><ui-icon name="copy"></ui-icon></button>
      </div>
    `;
  }
}
customElements.define("wiki-sidebar", WikiSidebar);

class WikiPage extends HTMLElement {
  constructor() {
    super();
    this.attachShadow({ mode: "open" });
    this.shadowRoot.innerHTML = `
      <style>
        :host { display: block; }
        .wrap { max-width: 1520px; margin: -7px auto 0; }
        header {
          display: flex;
          justify-content: space-between;
          align-items: flex-start;
          padding-bottom: 20px;
          border-bottom: 1px solid #d0d7de;
        }
        h1 { margin: 0 0 4px; font-size: 38px; font-weight: 400; line-height: 44px; }
        p { margin: 0; font-size: 17px; line-height: 26px; color: #656d76; }
        .actions { display: flex; gap: 6px; margin-top: 2px; }
        .actions button {
          height: 36px;
          padding: 0 10px;
          border: 1px solid #d0d7de;
          border-radius: 7px;
          background: #f6f8fa;
          font: 600 14px "Open Sans", sans-serif;
          color: #24292f;
        }
        .actions .primary {
          padding: 0 11px;
          background: #1f883d;
          border-color: #1c8139;
          color: #fff;
        }
        .cols {
          display: grid;
          grid-template-columns: minmax(0, 1fr) 371px;
          gap: 29px;
          align-items: start;
          margin-top: 30px;
        }
        h2 {
          margin: 0 0 20px;
          padding-bottom: 8px;
          border-bottom: 1px solid #d8dee4;
          font-size: 28px;
          font-weight: 600;
          line-height: 38px;
          color: #1766cc;
        }
      </style>
      <div class="wrap">
        <header>
          <div>
            <h1>Available Plugins</h1>
            <p>Mr.Hope edited this page on Apr 14 · 60 revisions</p>
          </div>
          <div class="actions"><button>Edit</button><button class="primary">New page</button></div>
        </header>
        <div class="cols">
          <main><h2>List of plugins</h2><plugin-table></plugin-table></main>
          <wiki-sidebar></wiki-sidebar>
        </div>
      </div>
    `;
  }
}
customElements.define("wiki-page", WikiPage);

// small tools that float above the browser
class ImeBar extends HTMLElement {
  constructor() {
    super();
    this.attachShadow({ mode: "open" });
    this.shadowRoot.innerHTML = `
      <style>
        :host {
          display: flex;
          align-items: center;
          gap: 12px;
          height: 34px;
          padding: 0 9px 0 8px;
          border-radius: 3px;
          background: #212121;
          color: #ddd;
          font-size: 20px;
          line-height: 34px;
        }
      </style>
      <ui-icon name="imepaw"></ui-icon>
      <b>中</b>
      <ui-icon name="punct"></ui-icon>
      <ui-icon name="moon"></ui-icon>
      <ui-icon name="person"></ui-icon>
      <ui-icon name="grid"></ui-icon>
    `;
  }
}
customElements.define("ime-bar", ImeBar);

class SpeedMeter extends HTMLElement {
  constructor() {
    super();
    this.attachShadow({ mode: "open" });
    this.shadowRoot.innerHTML = `
      <style>
        :host {
          display: flex;
          align-items: center;
          gap: 18px;
          height: 31px;
          padding: 0 13px 0 6px;
          border: 2px solid #93cb7c;
          border-radius: 8px;
          background: linear-gradient(#dcf3c4, #f6fdea 50%, #dcf3c4);
          color: #3f6a2f;
          font-size: 17px;
          white-space: nowrap;
          overflow: hidden;
        }
        ui-icon { position: absolute; right: 0; top: 0; }
        span { position: relative; z-index: 1; }
      </style>
      <span>上传: 0.11 KB/s</span>
      <span>下载: 0.13 KB/s</span>
      <ui-icon name="girl" size="36"></ui-icon>
    `;
  }
}
customElements.define("speed-meter", SpeedMeter);

class BrowserWindow extends HTMLElement {
  constructor() {
    super();
    this.attachShadow({ mode: "open" });
    this.shadowRoot.innerHTML = `
      <style>
        :host {
          position: relative;
          display: flex;
          flex-direction: column;
          flex: 1;
          min-height: 0;
          background: #f7f7f7;
        }
        .view {
          flex: 1;
          min-height: 0;
          display: grid;
          grid-template-columns: 1fr 18px;
          margin: 1px 5px 5px;
          border-radius: 8px;
          overflow: hidden;
          background: #fff;
          box-shadow: 0 0 2px #bbb;
        }
        .track {
          display: flex;
          flex-direction: column;
          align-items: center;
          background: #fafafa;
        }
        .arrow {
          margin-top: 10px;
          border: 6px solid transparent;
          border-top: 0;
          border-bottom: 8px solid #868686;
        }
        .thumb { width: 11px; height: 245px; margin-top: 83px; border-radius: 6px; background: #8b8b8b; }
        .level {
          position: absolute;
          right: 0;
          top: 205px;
          display: flex;
          flex-direction: column;
          align-items: center;
          justify-content: space-evenly;
          width: 18px;
          height: 53px;
          border-radius: 3px 0 0 3px;
          background: #262626;
        }
        .level i {
          width: 6px;
          height: 17px;
          background: repeating-linear-gradient(#555 0 1px, transparent 1px 2px);
          border-bottom: 1px solid #e0a83a;
        }
        .level i + i { border-color: #8cd04a; }
        ime-bar { position: absolute; right: 113px; bottom: 122px; }
        speed-meter { position: absolute; right: 0; bottom: 11px; }
        .cursor { position: absolute; left: 883px; top: 508px; }
      </style>
      <tab-strip></tab-strip>
      <tool-bar></tool-bar>
      <bookmark-bar></bookmark-bar>
      <div class="view">
        <wiki-page></wiki-page>
        <div class="track"><span class="arrow"></span><span class="thumb"></span></div>
      </div>
      <div class="level"><i></i><i></i></div>
      <ime-bar></ime-bar>
      <speed-meter></speed-meter>
      <ui-icon class="cursor" name="ibeam"></ui-icon>
    `;
  }
}
customElements.define("browser-window", BrowserWindow);

class TaskBar extends HTMLElement {
  constructor() {
    super();
    this.attachShadow({ mode: "open" });
    const apps = [
      ["start", ""], ["search", ""], ["taskview", ""], ["everything", ""],
      ["explorer", "open"], ["edge", "open active"], ["translate", ""], ["word", "open"],
    ];
    this.shadowRoot.innerHTML = `
      <style>
        :host {
          display: grid;
          grid-template-columns: 1fr auto 1fr;
          align-items: center;
          height: 57px;
          padding-bottom: 2px;
          flex: none;
          border-top: 1px solid #a5b7bc;
          background: #cfe8ef;
        }
        button { border: 0; padding: 0; background: none; display: flex; align-items: center; justify-content: center; }
        .apps { display: flex; gap: 7px; grid-column: 2; }
        .apps button { position: relative; width: 48px; height: 48px; border-radius: 5px; }
        .apps .active { background: #eaf5f8; }
        .open::after {
          content: "";
          position: absolute;
          bottom: 0;
          width: 8px;
          height: 4px;
          border-radius: 2px;
          background: #7c8f94;
        }
        .active::after { width: 20px; background: #2a7f8c; }
        .tray { display: flex; align-items: center; justify-content: flex-end; padding-right: 24px; }
        .tray button { width: 40px; height: 40px; }
        .tray .du { margin: 0 17px 0 8px; }
        .tray .sys { width: 100px; gap: 10px; justify-content: flex-start; }
        .tray .ime { color: #8fa3aa; font: 18px "Noto Sans CJK SC", sans-serif; }
        time { margin-right: 10px; text-align: right; font-size: 15px; line-height: 20px; color: #111; }
      </style>
      <div class="apps">
        ${apps.map(([name, cls]) => `<button class="${cls}" aria-label="${name}"><ui-icon name="${name}" size="30"></ui-icon></button>`).join("")}
      </div>
      <div class="tray">
        <button aria-label="Hidden icons"><ui-icon name="up" size="18"></ui-icon></button>
        <button aria-label="USB"><ui-icon name="usb"></ui-icon></button>
        <button aria-label="Microphone"><ui-icon name="mic"></ui-icon></button>
        <button class="ime">中</button>
        <button class="du" aria-label="Baidu input"><ui-icon name="du"></ui-icon></button>
        <button class="sys" aria-label="System">
          <ui-icon name="monitor"></ui-icon><ui-icon name="volume"></ui-icon><ui-icon name="battery"></ui-icon>
        </button>
        <time>21:29:49<br>2023/11/6</time>
        <ui-icon name="bell"></ui-icon>
      </div>
    `;
  }
}
customElements.define("task-bar", TaskBar);
</script>
</body>
</html>
